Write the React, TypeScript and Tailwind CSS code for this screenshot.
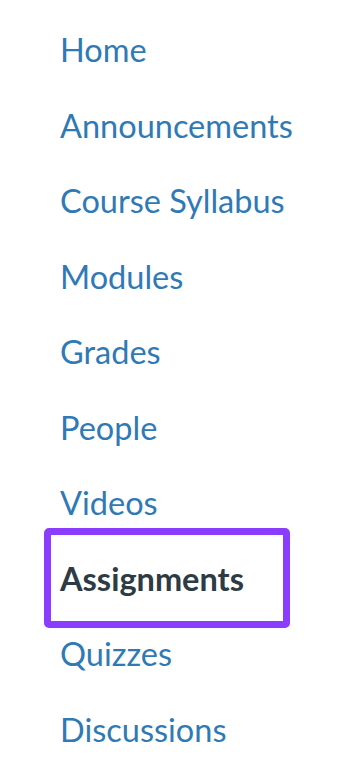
const items = [
  'Home',
  'Announcements',
  'Course Syllabus',
  'Modules',
  'Grades',
  'People',
  'Videos',
  'Assignments',
  'Quizzes',
  'Discussions',
];

export default function App() {
  return (
    <div className="w-[357px] h-[782px] bg-white overflow-hidden" style={{ fontFamily: 'Lato, "Noto Sans", sans-serif' }}>
      <nav className="pt-[12px]">
        <ul className="flex flex-col">
          {items.map((label) => {
            const active = label === 'Assignments';
            return (
              <li key={label} className="relative h-[75.5px] flex items-center pl-[60px]">
                {active && (
                  <div className="absolute left-[44px] w-[246px] top-[-13px] bottom-[-12px] border-[7px] border-[#8b3dff] rounded-[5px]" />
                )}
                <a
                  href="#"
                  className={
                    active
                      ? 'text-[32.5px] leading-[1.2] font-bold text-[#2d3b45]'
                      : 'text-[32.5px] leading-[1.2] text-[#2f7ab5]'
                  }
                >
                  {label}
                </a>
              </li>
            );
          })}
        </ul>
      </nav>
    </div>
  );
}
